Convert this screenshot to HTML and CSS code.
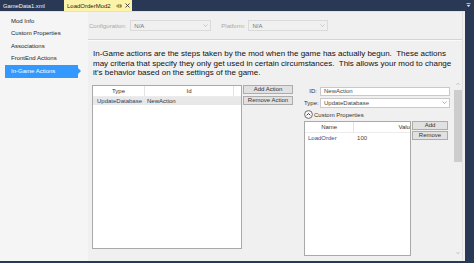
FILE: index.html
```html
<!DOCTYPE html>
<html lang="en">
<head>
    <meta charset="UTF-8">
    <meta name="viewport" content="width=device-width, initial-scale=1.0">
    <title>LoadOrderMod2</title>
    <link rel="stylesheet" href="styles.css">
</head>
<body>
    <div class="window">
        <div class="tabbar">
            <div class="tab">GameData1.xml</div>
            <div class="tab active">
                <span>LoadOrderMod2</span>
                <svg class="pin" width="6" height="6" viewBox="0 0 6 6">
                    <path d="M0 3h2M2 1.5v3M2 2h3v2H2M5 1.5v3" stroke="#7a6a2a" stroke-width="0.8" fill="none"/>
                </svg>
                <svg class="close" width="5" height="5" viewBox="0 0 5 5">
                    <path d="M0.5 0.5l4 4M4.5 0.5l-4 4" stroke="#3c3c3c" stroke-width="0.9"/>
                </svg>
            </div>
            <svg class="tab-menu" width="5" height="5" viewBox="0 0 5 5">
                <path d="M0.5 0.6h4" stroke="#dfe6f0" stroke-width="0.8"/>
                <path d="M0.8 2h3.4L2.5 4z" fill="#dfe6f0"/>
            </svg>
        </div>

        <div class="doc">
            <nav class="sidenav">
                <div class="nav-item">Mod Info</div>
                <div class="nav-item">Custom Properties</div>
                <div class="nav-item">Associations</div>
                <div class="nav-item">FrontEnd Actions</div>
                <div class="nav-item selected">In-Game Actions</div>
            </nav>

            <section class="content">
                <div class="config-row">
                    <span class="config-label">Configuration:</span>
                    <div class="combo disabled config-combo">
                        <span>N/A</span>
                        <svg width="5" height="3" viewBox="0 0 5 3"><path d="M0.5 0.5l2 2 2-2" stroke="#b5b5b5" stroke-width="0.7" fill="none"/></svg>
                    </div>
                    <span class="config-label platform-label">Platform:</span>
                    <div class="combo disabled platform-combo">
                        <span>N/A</span>
                        <svg width="5" height="3" viewBox="0 0 5 3"><path d="M0.5 0.5l2 2 2-2" stroke="#b5b5b5" stroke-width="0.7" fill="none"/></svg>
                    </div>
                </div>

                <p class="desc">In-Game actions are the steps taken by the mod when the game has actually begun.&nbsp; These actions<br>may criteria that specify they only get used in certain circumstances.&nbsp; This allows your mod to change<br>it's behavior based on the settings of the game.</p>

                <div class="editor">
                    <div class="list action-list">
                        <div class="list-header">
                            <div class="col col-type">Type</div>
                            <div class="col col-id">Id</div>
                        </div>
                        <div class="list-row selected-row">
                            <div class="cell col-type type-cell">UpdateDatabase</div>
                            <div class="cell col-id">NewAction</div>
                        </div>
                    </div>

                    <div class="button-col action-buttons">
                        <button class="btn">Add Action</button>
                        <button class="btn">Remove Action</button>
                    </div>

                    <div class="props">
                        <div class="field">
                            <label class="field-label">ID:</label>
                            <div class="textbox">NewAction</div>
                        </div>
                        <div class="field">
                            <label class="field-label">Type:</label>
                            <div class="combo type-combo">
                                <span>UpdateDatabase</span>
                                <svg width="5" height="3" viewBox="0 0 5 3"><path d="M0.5 0.5l2 2 2-2" stroke="#8a8a8a" stroke-width="0.7" fill="none"/></svg>
                            </div>
                        </div>
                        <div class="expander">
                            <svg width="9" height="9" viewBox="0 0 9 9">
                                <circle cx="4.5" cy="4.5" r="3.9" fill="#fafafa" stroke="#4a4a4a" stroke-width="0.8"/>
                                <path d="M2.7 5.3l1.8-1.8 1.8 1.8" stroke="#222" stroke-width="0.9" fill="none"/>
                            </svg>
                            <span>Custom Properties</span>
                        </div>
                        <div class="props-body">
                            <div class="list prop-list">
                                <div class="list-header">
                                    <div class="col col-name">Name</div>
                                    <div class="col col-value">Value</div>
                                </div>
                                <div class="list-row">
                                    <div class="cell col-name name-cell">LoadOrder</div>
                                    <div class="cell col-value value-cell">100</div>
                                </div>
                            </div>
                            <div class="button-col prop-buttons">
                                <button class="btn">Add</button>
                                <button class="btn">Remove</button>
                            </div>
                        </div>
                    </div>

                    <div class="vscroll">
                        <svg class="arrow" width="8" height="6" viewBox="0 0 8 6"><path d="M2.5 3.8L4 2.3l1.5 1.5" stroke="#a8a8a8" stroke-width="0.7" fill="none"/></svg>
                        <div class="thumb"></div>
                        <div class="track"></div>
                        <svg class="arrow" width="8" height="6" viewBox="0 0 8 6"><path d="M2.5 2.2L4 3.7l1.5-1.5" stroke="#a8a8a8" stroke-width="0.7" fill="none"/></svg>
                    </div>
                </div>
            </section>
        </div>
    </div>
</body>
</html>
```

FILE: styles.css
```css
body {
    margin: 0;
    width: 474px;
    height: 263px;
    overflow: hidden;
    background-color: #293955;
    font-family: "Liberation Sans", Arial, sans-serif;
    font-size: 6px;
    color: #1e1e1e;
}

.window {
    display: flex;
    flex-direction: column;
    height: 263px;
}

/* document tabs */
.tabbar {
    height: 11px;
    display: flex;
    align-items: stretch;
    flex-shrink: 0;
}

.tab {
    width: 49px;
    padding-left: 3px;
    display: flex;
    align-items: center;
    color: #f2f4f8;
    font-size: 5.8px;
}

.tab.active {
    width: 65px;
    margin-left: 12px;
    background-color: #fdf3a8;
    color: #1b1b1b;
    font-size: 6px;
}

.tab .pin {
    margin-left: 5px;
}

.tab .close {
    margin-left: 3px;
}

.tab-menu {
    margin: 3px 3px 0 auto;
}

/* document well */
.doc {
    flex: 1;
    display: flex;
    margin: 0 9px 2px 0;
    background-color: #f0f0f0;
    border-top: 1px solid #dfe3d6;
}

.sidenav {
    width: 88px;
    flex-shrink: 0;
    padding-top: 3px;
    background-color: #f5f5f5;
}

.nav-item {
    height: 12.4px;
    line-height: 12.4px;
    padding-left: 11px;
    color: #1e1e1e;
}

.nav-item.selected {
    position: relative;
    width: 67px;
    height: 13px;
    line-height: 13px;
    margin-left: 5px;
    padding-left: 6px;
    background-color: #3399ff;
    color: white;
}

.nav-item.selected::after {
    content: "";
    position: absolute;
    right: -3px;
    top: 3.5px;
    border-top: 3px solid transparent;
    border-bottom: 3px solid transparent;
    border-left: 3px solid #3399ff;
}

.content {
    flex: 1;
    display: flex;
    flex-direction: column;
    margin-right: 2px;
    border-right: 1px solid #e2e2e2;
}

/* configuration bar */
.config-row {
    height: 27px;
    flex-shrink: 0;
    display: flex;
    align-items: center;
    padding-left: 1px;
    border-bottom: 1px solid #d4d4d4;
    box-shadow: 0 1px 0 #fafafa;
}

.config-label {
    color: #a9a9a9;
}

.platform-label {
    margin-left: 10px;
}

.combo {
    height: 11px;
    box-sizing: border-box;
    display: flex;
    align-items: center;
    justify-content: space-between;
    padding: 0 2px 0 3px;
    border: 1px solid #c9c9c9;
    background-color: white;
}

.combo.disabled {
    border-color: #dadada;
    background-color: #f0f0f0;
    color: #747474;
}

.config-combo {
    width: 81px;
    margin-left: 4px;
}

.platform-combo {
    width: 80px;
    margin-left: 3px;
}

.desc {
    margin: 9px 0 0 5px;
    font-size: 8px;
    line-height: 9.5px;
    color: #111;
}

/* action editor */
.editor {
    flex: 1;
    display: flex;
    align-items: flex-start;
    margin-top: 3px;
    padding-left: 4px;
}

.list {
    box-sizing: border-box;
    border: 1px solid #a9a9a9;
    background-color: white;
    overflow: hidden;
}

.action-list {
    width: 150px;
    height: 164px;
    margin-top: 4px;
}

.list-header {
    height: 10px;
    display: flex;
    border-bottom: 1px solid #ececec;
}

.col {
    box-sizing: border-box;
    line-height: 10px;
    text-align: center;
    border-right: 1px solid #e3e3e3;
    color: #333;
    white-space: nowrap;
}

.list-row {
    height: 8px;
    display: flex;
    align-items: center;
}

.selected-row {
    background-color: #e8e8e8;
}

.cell {
    box-sizing: border-box;
    white-space: nowrap;
    text-align: left;
    color: #333;
}

.col-type {
    width: 52px;
}

.col-id {
    width: 89px;
}

.type-cell {
    padding-left: 4px;
    color: #2f3f5f;
}

.list-row .col-id {
    padding-left: 2px;
}

.button-col {
    display: flex;
    flex-direction: column;
    gap: 2px;
}

.action-buttons {
    width: 50px;
    margin: 4px 0 0 1px;
}

.btn {
    height: 9px;
    padding: 0;
    box-sizing: border-box;
    border: 1px solid #acacac;
    background-color: #e1e1e1;
    font-family: inherit;
    font-size: 6px;
    line-height: 7px;
    color: #333;
}

.props {
    width: 146px;
    margin: 6px 0 0 11px;
    display: flex;
    flex-direction: column;
}

.field {
    display: flex;
    align-items: center;
    margin-bottom: 2px;
}

.field-label {
    width: 13px;
    margin-right: 3px;
    text-align: right;
    color: #333;
}

.textbox {
    width: 130px;
    height: 9px;
    box-sizing: border-box;
    padding-left: 3px;
    line-height: 7px;
    border: 1px solid #c9c9c9;
    background-color: white;
    color: #444;
}

.type-combo {
    width: 130px;
    height: 10px;
    color: #444;
}

.expander {
    height: 10px;
    display: flex;
    align-items: center;
    gap: 1px;
    color: #333;
}

.props-body {
    display: flex;
    align-items: flex-start;
    margin-top: 1px;
}

.prop-list {
    width: 107px;
    height: 135px;
}

.col-name {
    width: 51px;
}

.col-value {
    width: 56px;
    overflow: hidden;
}

.list-header .col-value {
    padding-left: 44px;
    text-align: left;
    border-right: none;
}

.prop-list .list-row {
    margin-top: 1px;
}

.name-cell {
    padding-left: 3px;
    color: #30508a;
}

.value-cell {
    padding-left: 2px;
    color: #444;
}

.prop-buttons {
    width: 36px;
    margin-left: 1px;
    gap: 1px;
}

.vscroll {
    width: 8px;
    height: 175px;
    margin-left: auto;
    display: flex;
    flex-direction: column;
}

.arrow {
    flex-shrink: 0;
}

.thumb {
    height: 72px;
    margin: 3px 0 0 0;
    background-color: #cdcdcd;
}

.track {
    flex: 1;
}
```
